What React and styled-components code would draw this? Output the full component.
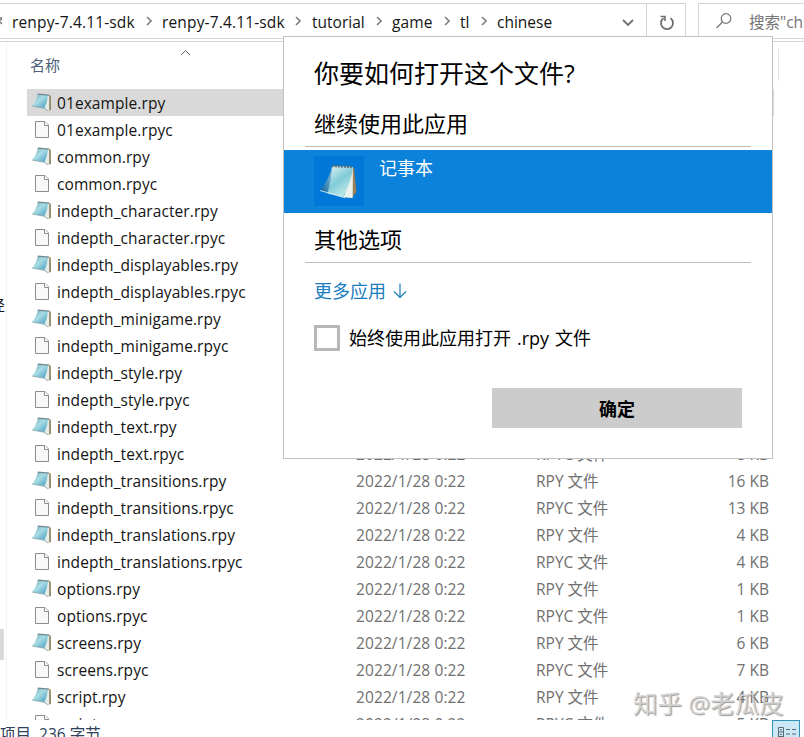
import React from 'react';
import styled, { createGlobalStyle, css } from 'styled-components';

const Global = createGlobalStyle`
  * { box-sizing: border-box; }
  body { margin: 0; background: #fff; overflow: hidden; }
`;

const Window = styled.div`
  position: relative;
  width: 804px;
  height: 737px;
  overflow: hidden;
  display: flex;
  flex-direction: column;
  background: #fff;
  color: #141414;
  font-family: 'Open Sans', 'Noto Sans CJK SC', sans-serif;
  font-size: 15.5px;
  white-space: nowrap;
`;

const TopBar = styled.header`
  flex: none;
  display: flex;
  height: 42px;
  padding-top: 3px;
  border-bottom: 1px solid #d4d4d4;
`;

const AddressBar = styled.nav`
  flex: none;
  display: flex;
  width: 686px;
  height: 36px;
  border: 1px solid #d4d4d4;
  border-left: 0;
`;

const Crumbs = styled.div`
  flex: 1;
  display: flex;
  align-items: center;
  overflow: hidden;
`;

const Crumb = styled.span`
  flex: none;
  width: ${(p) => p.$width}px;
  letter-spacing: ${(p) => p.$track || 0}px;
  line-height: 20px;
  padding-top: 1px;
`;

const CrumbArrow = styled.svg`
  flex: none;
  width: 6px;
  height: 10px;
  margin: 0 ${(p) => p.$after}px 0 0;
  fill: none;
  stroke: #808080;
  stroke-width: 1.6;
`;

const CutMark = styled.svg`
  flex: none;
  width: 12px;
  height: 10px;
  fill: none;
  stroke: #777;
  stroke-width: 1.3;
`;

const BarButton = styled.button`
  display: grid;
  place-items: center;
  width: ${(p) => p.$width}px;
  padding: 4px 0 0 ${(p) => p.$inset || 0}px;
  border: 0;
  border-left: ${(p) => (p.$divided ? '1px solid #d4d4d4' : '0')};
  background: none;
`;

const SearchBox = styled.div`
  flex: none;
  display: flex;
  align-items: center;
  gap: 17px;
  width: 106px;
  height: 36px;
  margin-left: 12px;
  padding-left: 17px;
  border: 1px solid #d4d4d4;
  border-right: 0;
  color: #757575;
  overflow: hidden;
  svg { flex: none; }
`;

const Body = styled.div`
  flex: none;
  display: flex;
  height: 678px;
  overflow: hidden;
`;

const Sidebar = styled.aside`
  flex: none;
  display: flex;
  flex-direction: column;
  justify-content: space-between;
  width: 7px;
  padding: 253px 0 60px;
  border-right: 1px solid #f3f3f3;
  overflow: hidden;
`;

const SidebarLabel = styled.span`
  display: flex;
  justify-content: flex-end;
  width: 5px;
  overflow: hidden;
  font-size: 15px;
  line-height: 20px;
`;

const SidebarThumb = styled.div`
  width: 4px;
  height: 31px;
  background: #d9d9d9;
`;

const Files = styled.main`
  flex: 1;
  padding-left: 20px;
`;

const ListHeader = styled.div`
  display: flex;
  height: 47px;
  padding: 7px 0 0 3px;
  color: #4c607a;
  font-size: 15px;
`;

const HeaderName = styled.span`
  width: 150px;
  padding-top: 5px;
  line-height: 22px;
`;

const HeaderEdge = styled.i`
  margin-left: 587px;
  width: 1px;
  height: 32px;
  background: #e5e5e5;
`;

const FileRow = styled.div`
  display: grid;
  grid-template-columns: 30px 299px 180px 140px 93px;
  align-items: center;
  width: 747px;
  height: 27px;
  line-height: 25px;
  color: #707070;
  ${(p) => p.$selected && css`background: #d9d9d9;`}
`;

const IconCell = styled.span`
  display: flex;
  padding-left: 5px;
  svg { display: block; }
`;

const FileName = styled.span`
  padding-top: 2px;
  color: #141414;
  letter-spacing: 0.08px;
`;

const FileMeta = styled.span`
  padding-top: 2px;
  letter-spacing: ${(p) => p.$track || 0}px;
  text-align: ${(p) => (p.$right ? 'right' : 'left')};
`;

const StatusBar = styled.footer`
  flex: none;
  display: flex;
  justify-content: space-between;
  height: 17px;
  overflow: hidden;
  background: #fff;
  color: #2d415c;
  line-height: 28px;
`;

const StatusText = styled.span`
  display: flex;
  gap: 8px;
`;

const ViewButton = styled.button`
  display: flex;
  justify-content: center;
  width: 28px;
  height: 28px;
  margin-right: 4px;
  padding: 6px 0 0 2px;
  border: 1px solid #2f93b5;
  background: #cce8f6;
`;

const Dialog = styled.section`
  position: absolute;
  left: 283px;
  top: 36px;
  width: 490px;
  height: 423px;
  display: flex;
  flex-direction: column;
  border: 1px solid #c3c3c3;
  background: #fff;
  color: #000;
`;

const DialogTitle = styled.h1`
  margin: 18px 0 0 30px;
  height: 37px;
  font-size: 25px;
  font-weight: 400;
  line-height: 36px;
`;

const SectionTitle = styled.h2`
  width: 446px;
  height: 40px;
  margin: ${(p) => p.$top}px 0 0 21px;
  padding-left: 9px;
  border-bottom: 1px solid #bdbdbd;
  font-size: 22px;
  font-weight: 400;
  line-height: 32px;
`;

const AppChoice = styled.div`
  display: flex;
  height: 63px;
  margin-top: 3px;
  padding: 6px 0 0 30px;
  gap: 15px;
  background: #0c82da;
  color: #fff;
  font-size: 18px;
  line-height: 25px;
`;

const AppTile = styled.div`
  display: grid;
  place-items: center;
  width: 50px;
  height: 50px;
  background: #0078d7;
`;

const MoreApps = styled.a`
  display: flex;
  align-items: center;
  gap: 7px;
  height: 28px;
  margin: 14px 0 0 30px;
  color: #1a7dc0;
  font-size: 18px;
  line-height: 28px;
`;

const AlwaysRow = styled.label`
  display: flex;
  align-items: center;
  gap: 9px;
  height: 26px;
  margin: 20px 0 0 30px;
  font-size: 18px;
  line-height: 24px;
  word-spacing: 1.3px;
`;

const CheckBox = styled.span`
  width: 26px;
  height: 26px;
  border: 3px solid #b8b8b8;
`;

const OkButton = styled.button`
  width: 250px;
  height: 40px;
  margin: 37px 0 0 208px;
  padding: 0;
  border: 0;
  background: #ccc;
  color: #000;
  font-family: inherit;
  font-size: 18px;
  font-weight: 700;
`;

const Watermark = styled.div`
  position: absolute;
  left: 633px;
  top: 686px;
  color: rgba(215, 215, 215, 0.85);
  font-size: 24.5px;
  line-height: 36px;
  text-shadow: 1px 1px 1px rgba(110, 110, 110, 0.7);
`;

const NoteIcon = () => (
  <svg width="20" height="20" viewBox="0 0 20 20">
    <defs>
      <linearGradient id="note" x1="0" y1="0" x2="1" y2="1">
        <stop offset="0" stopColor="#6a9fb2" />
        <stop offset=".45" stopColor="#a9dce6" />
        <stop offset="1" stopColor="#3f9bbb" />
      </linearGradient>
    </defs>
    <path d="M16.500 1.500l2.300 1.200.2 14-3.500 1.600z" fill="#8f8264" />
    <path d="M6 1L17.200 2 17.200 18 11.500 15z" fill="#e4ecea" />
    <path d="M5.800 1L16 2Q15.500 9 12.500 15L.2 13Q4.500 8 5.800 1z" fill="url(#note)" />
    <path d="M5.800 1.200L17 2.200" stroke="#71858c" strokeWidth="1.200" />
    <path d="M.2 13L12 15.200l3.500 2.300" stroke="#7d9ca6" strokeWidth=".8" fill="none" />
  </svg>
);

const PageIcon = () => (
  <svg width="20" height="20" viewBox="0 0 20 20">
    <path d="M3.500 1.500h9.500l3.500 3.500v12.500H3.500z" fill="#f8f8f8" stroke="#8d8d8d" />
    <path d="M12.500 1.500V5.500h4" fill="#fff" stroke="#8d8d8d" />
  </svg>
);

const NotepadIcon = () => (
  <svg width="50" height="50" viewBox="0 0 50 50">
    <defs>
      <linearGradient id="pad" x1="0" y1="0" x2=".6" y2="1">
        <stop offset="0" stopColor="#e6f5f5" />
        <stop offset=".55" stopColor="#7fcbd8" />
        <stop offset="1" stopColor="#c4ebea" />
      </linearGradient>
      <linearGradient id="fold" x1="1" y1="0" x2="0" y2="1">
        <stop offset="0" stopColor="#9cc7d8" />
        <stop offset="1" stopColor="#075f9d" />
      </linearGradient>
    </defs>
    <path d="M38 11l2 1 2.500 24-4 5z" fill="#9a7d50" />
    <path d="M18 11L15 37 6 34.500Q15 24 18 11z" fill="url(#fold)" />
    <path d="M18 10L39 11 38.500 41.500 33 41z" fill="#dfe7e2" />
    <path d="M18 10L39 11Q37 27 29 41L13.500 37.500Q17 25 18 10z" fill="url(#pad)" />
    <path d="M38.500 18Q35 32 29 41.200L38.500 42z" fill="#eef2ec" />
    <path d="M18 10L39 11" stroke="#546c72" strokeWidth="2.400" strokeDasharray="1.800 1.200" />
    <path d="M6 34.500L31 41.800" stroke="#e9f8f8" strokeWidth=".8" />
  </svg>
);

const Arrow = ({ after }) => (
  <CrumbArrow $after={after} viewBox="0 0 6 10"><path d="M1 1l4 4-4 4" /></CrumbArrow>
);

const files = [
  ['01example', 4], ['common', 20], ['indepth_character', 12], ['indepth_displayables', 9],
  ['indepth_minigame', 7], ['indepth_style', 14], ['indepth_text', 11, 8],
  ['indepth_transitions', 16, 13], ['indepth_translations', 4, 4], ['options', 1, 1],
  ['screens', 6, 7], ['script', 4, 5],
].flatMap(([name, a, b]) => [
  { name: `${name}.rpy`, type: 'RPY 文件', size: a },
  { name: `${name}.rpyc`, type: 'RPYC 文件', size: b ?? a },
]);

export default function App() {
  return (
    <Window>
      <Global />
      <TopBar>
        <AddressBar>
          <Crumbs>
            <CutMark viewBox="0 0 12 10"><path d="M-2 2h4M2 3L-1 5l3 3" /></CutMark>
            <Crumb $width={134} $track={0.15}>renpy-7.4.11-sdk</Crumb><Arrow after={10} />
            <Crumb $width={133} $track={0.15}>renpy-7.4.11-sdk</Crumb><Arrow after={11} />
            <Crumb $width={64}>tutorial</Crumb><Arrow after={10} />
            <Crumb $width={52} $track={0.15}>game</Crumb><Arrow after={10} />
            <Crumb $width={21}>tl</Crumb><Arrow after={10} />
            <Crumb $width={60}>chinese</Crumb>
          </Crumbs>
          <BarButton $width={38} $inset={2} aria-label="history">
            <svg width="12" height="8" viewBox="0 0 12 8"><path d="M1 1l5 5 5-5" fill="none" stroke="#6f6f6f" strokeWidth="1.800" /></svg>
          </BarButton>
          <BarButton $width={39} $inset={2} $divided aria-label="refresh">
            <svg width="16" height="16" viewBox="0 0 16 16">
              <path d="M11.500 3.300A6 6 0 1 1 4.500 3.300" fill="none" stroke="#6f6f6f" strokeWidth="1.800" />
              <path d="M1.500 1.500h4.500v4.500" fill="none" stroke="#6f6f6f" strokeWidth="1.600" />
            </svg>
          </BarButton>
        </AddressBar>
        <SearchBox>
          <svg width="16" height="16" viewBox="0 0 16 16" fill="none" stroke="#757575" strokeWidth="1.200">
            <circle cx="10" cy="5.500" r="4.800" /><path d="M6.500 9L.5 15" />
          </svg>
          <span>搜索"chinese"</span>
        </SearchBox>
      </TopBar>
      <Body>
        <Sidebar>
          <SidebarLabel>径</SidebarLabel>
          <SidebarThumb />
        </Sidebar>
        <Files>
          <ListHeader>
            <HeaderName>名称</HeaderName>
            <svg width="11" height="7" viewBox="0 0 11 7"><path d="M1 6l4.500-4.500L10 6" fill="none" stroke="#666" /></svg>
            <HeaderEdge />
          </ListHeader>
          {files.map((f, i) => (
            <FileRow key={f.name} $selected={i === 0}>
              <IconCell>{i % 2 ? <PageIcon /> : <NoteIcon />}</IconCell>
              <FileName>{f.name}</FileName>
              <FileMeta $track={0.1}>2022/1/28 0:22</FileMeta>
              <FileMeta>{f.type}</FileMeta>
              <FileMeta $right>{f.size} KB</FileMeta>
            </FileRow>
          ))}
        </Files>
      </Body>
      <StatusBar>
        <StatusText><span>项目</span><span>236 字节</span></StatusText>
        <ViewButton aria-label="details">
          <svg width="19" height="14" viewBox="0 0 19 14" fill="none" stroke="#556b78">
            <path d="M.5.500h5v13h-5zM.5 5h5M.5 9.500h5M8 2.500h4M14 2.500h4M8 7h4M14 7h4M8 11.500h4M14 11.500h4" />
            <path d="M2 3h2M2 7.500h2" />
          </svg>
        </ViewButton>
      </StatusBar>
      <Dialog>
        <DialogTitle>你要如何打开这个文件?</DialogTitle>
        <SectionTitle $top={15}>继续使用此应用</SectionTitle>
        <AppChoice>
          <AppTile><NotepadIcon /></AppTile>
          <span>记事本</span>
        </AppChoice>
        <SectionTitle $top={10}>其他选项</SectionTitle>
        <MoreApps>
          更多应用
          <svg width="14" height="16" viewBox="0 0 14 16" fill="none" stroke="#1a7dc0" strokeWidth="1.200"><path d="M7 .5v14M1 8.500l6 6 6-6" /></svg>
        </MoreApps>
        <AlwaysRow><CheckBox />始终使用此应用打开 .rpy 文件</AlwaysRow>
        <OkButton>确定</OkButton>
      </Dialog>
      <Watermark>知乎 @老瓜皮</Watermark>
    </Window>
  );
}
